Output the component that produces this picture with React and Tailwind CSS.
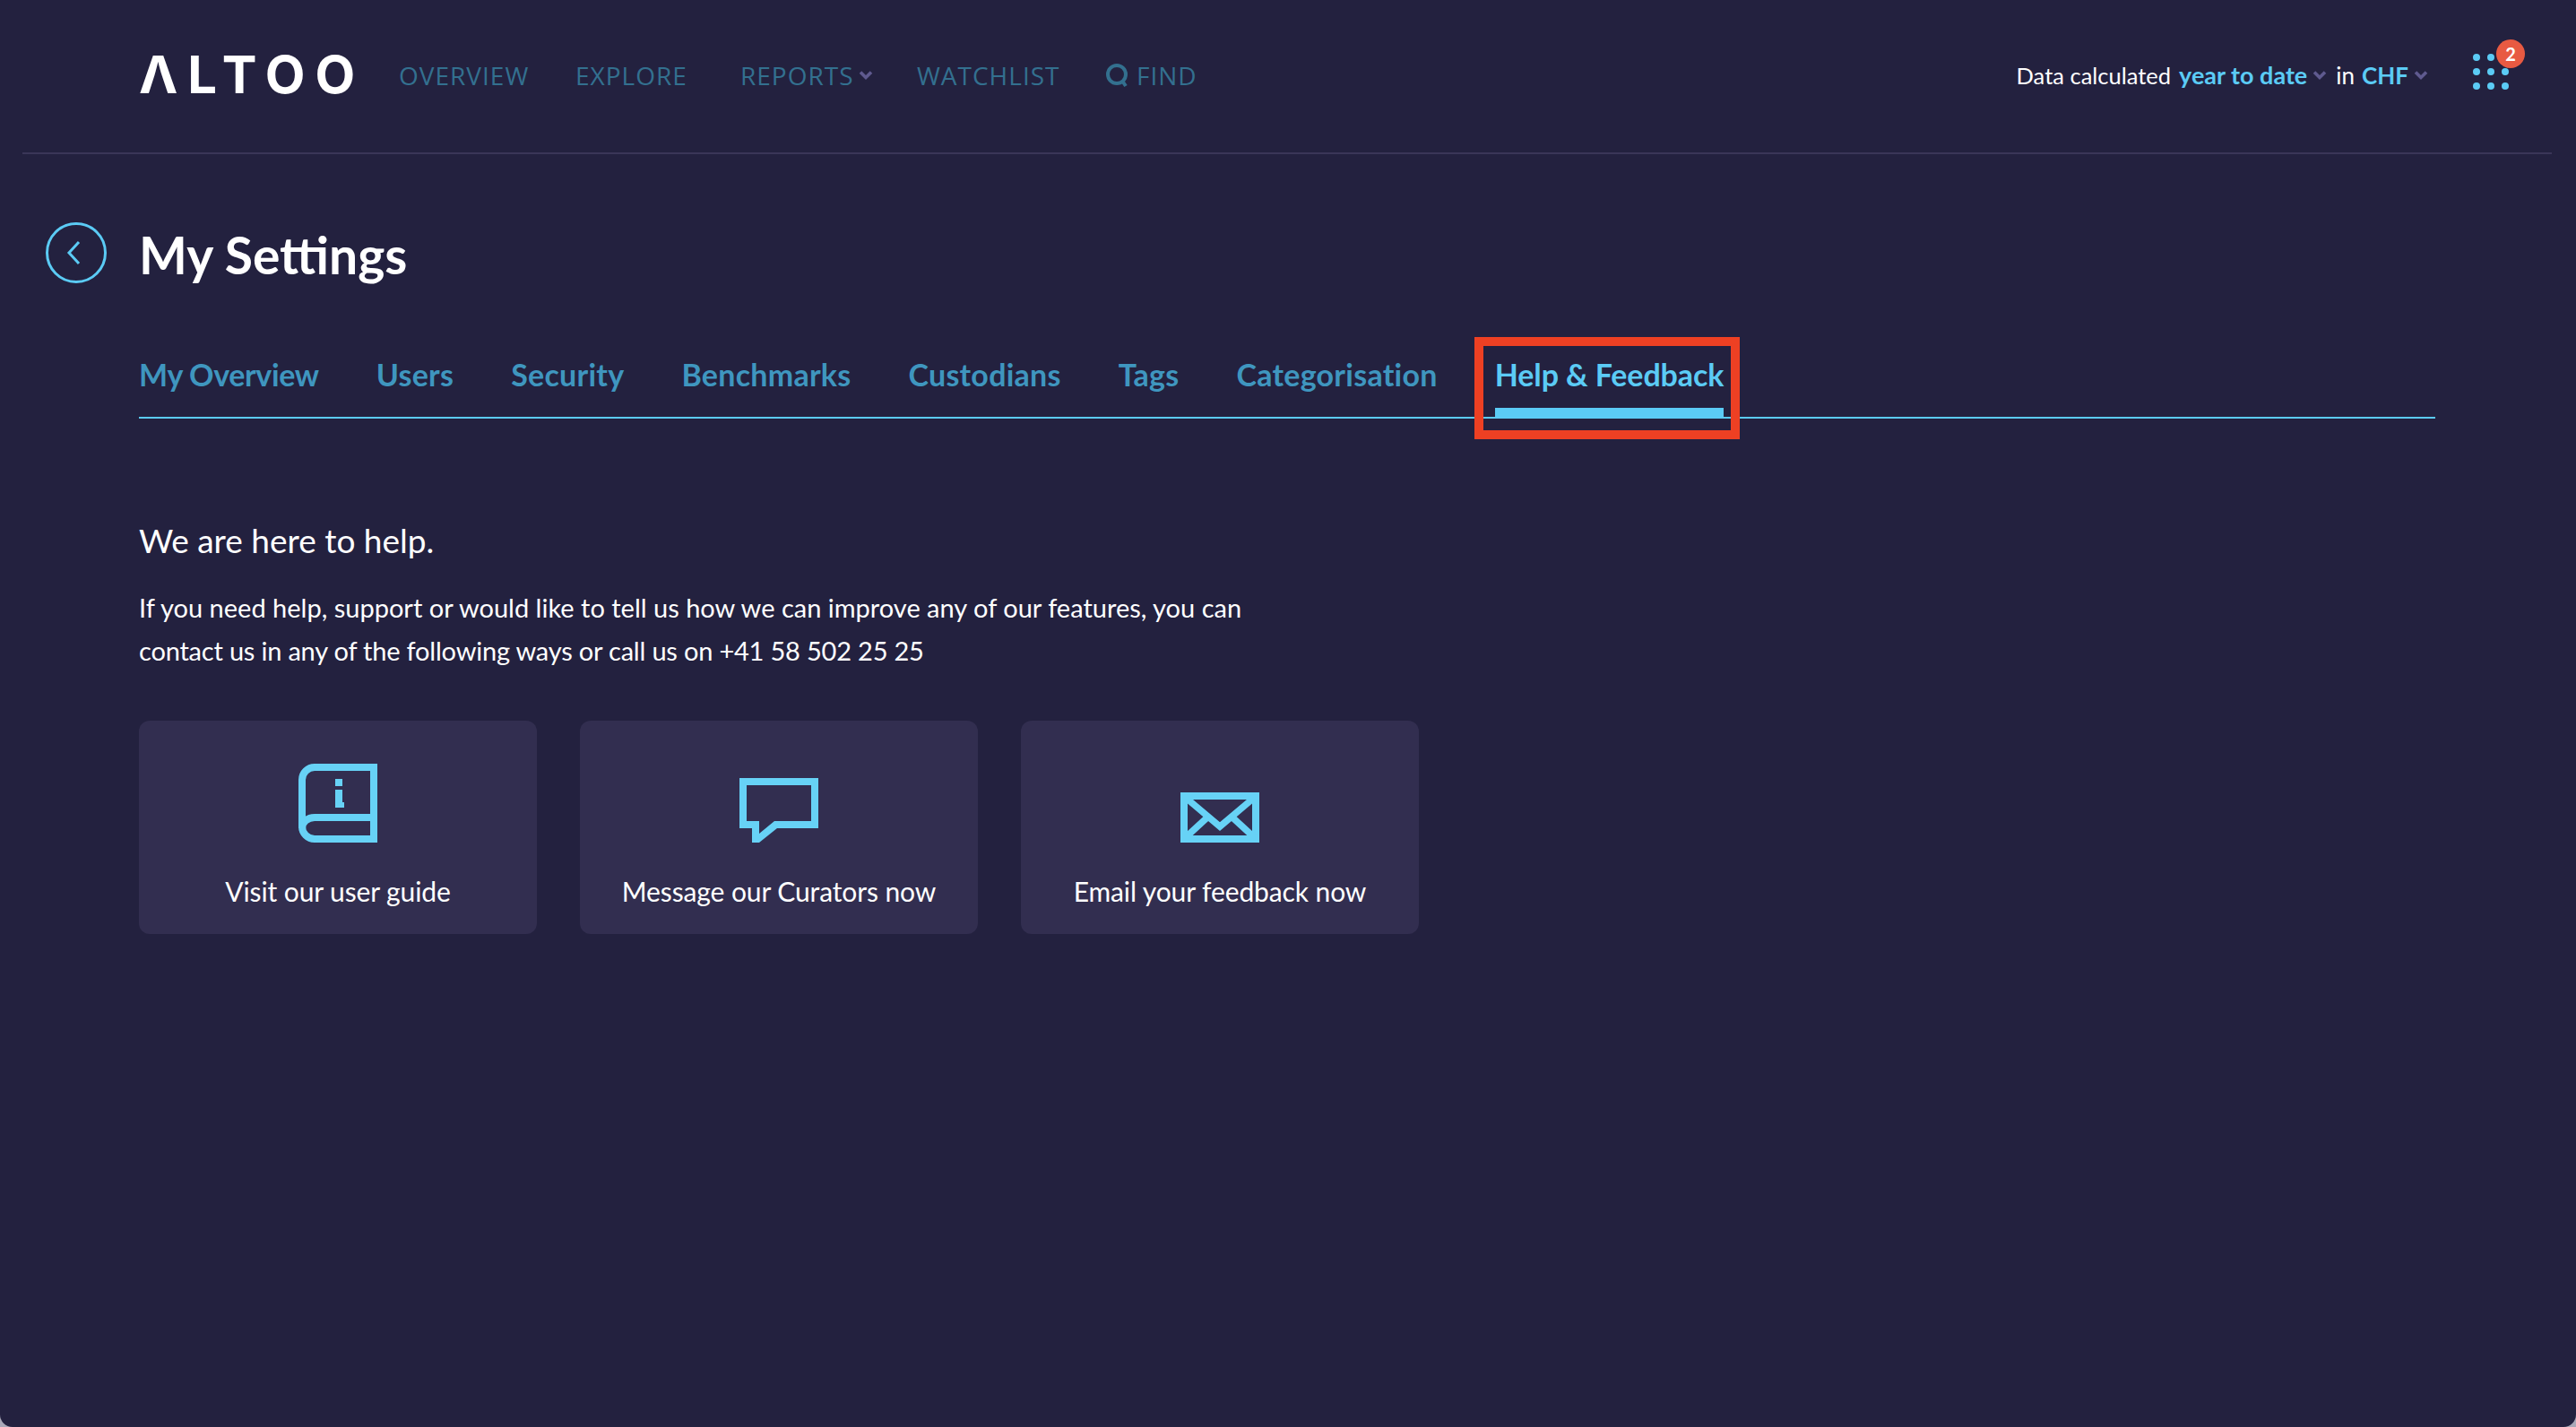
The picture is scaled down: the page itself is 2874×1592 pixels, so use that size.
import React from "react";

const BLUE = "#5bcbf5";

function Chevron({ className }) {
  return (
    <svg viewBox="0 0 16 12" className={className} fill="none" stroke="#5f5a8f" strokeWidth="3.6">
      <path d="M2 2.5 8 8.5 14 2.5" />
    </svg>
  );
}

function BookIcon() {
  return (
    <svg viewBox="0 0 88 88" className="w-[88px] h-[88px]" fill="none" stroke="#67d2f6" strokeWidth="8">
      <path d="M84 4H18A14 14 0 0 0 4 18V70A14 14 0 0 0 18 84H84Z" />
      <path d="M84 60H18A14 12 0 0 0 4 72" />
      <path d="M41 17h8v8h-8zM41 29h8v14h2v6H41z" fill="#67d2f6" stroke="none" />
    </svg>
  );
}

function ChatIcon() {
  return (
    <svg viewBox="0 0 88 72" className="w-[88px] h-[72px]">
      <path fill="#67d2f6" fillRule="evenodd" d="M0 0H88V56H42L22 72H14V56H0ZM8 8V48H22V62L39 48H80V8Z" />
    </svg>
  );
}

function MailIcon() {
  return (
    <svg viewBox="0 0 88 56" className="w-[88px] h-[56px]" fill="none" stroke="#67d2f6" strokeWidth="8">
      <rect x="4" y="4" width="80" height="48" />
      <path d="M6 6 44 38 82 6" strokeWidth="7.5" />
      <path d="M6 50 31 27M82 50 57 27" strokeWidth="7.5" />
    </svg>
  );
}

const tabs = ["My Overview", "Users", "Security", "Benchmarks", "Custodians", "Tags", "Categorisation"];

const cards = [
  { label: "Visit our user guide", icon: <BookIcon /> },
  { label: "Message our Curators now", icon: <ChatIcon /> },
  { label: "Email your feedback now", icon: <MailIcon /> },
];

export default function App() {
  return (
    <div className="w-full h-[1592px] bg-[#a9a8b8] overflow-hidden">
      <div className="h-full rounded-b-[14px] bg-[#23213f] overflow-hidden text-white font-['Lato',sans-serif]">
        <header className="ml-[25px] mr-[27px] h-[172px] border-b-2 border-[#3a3658] pl-[130px] flex items-center relative">
          <div aria-label="ALTOO" className="mb-[4px] w-[240px] font-['Inter',sans-serif] font-bold text-[58px] leading-none tracking-[11px] whitespace-nowrap">
            ΛLTOO
          </div>
          <nav className="mb-[2px] ml-[50px] flex items-center font-['Open_Sans',sans-serif] font-normal text-[28px] leading-[40px] text-[#33708f] tracking-[1px]">
            <span className="w-[197px]">OVERVIEW</span>
            <span className="w-[184px]">EXPLORE</span>
            <span className="flex items-center w-[197px]">
              REPORTS
              <Chevron className="w-[16px] h-[12px] ml-[5px]" />
            </span>
            <span className="w-[210px]">WATCHLIST</span>
            <span className="flex items-center">
              <svg viewBox="0 0 26 28" className="w-[26px] h-[28px] mr-[9px]" fill="none" stroke="#33708f" strokeWidth="4">
                <circle cx="13" cy="13" r="10" />
                <path d="M19 20l4 6" />
              </svg>
              FIND
            </span>
          </nav>
          <div className="mb-[2px] ml-auto mr-[48px] flex items-center text-[25.5px] leading-[40px]">
            <span>Data calculated</span>
            <span className="ml-[9px] font-bold text-[#5bcbf5] text-[27px]">year to date</span>
            <Chevron className="w-[16px] h-[12px] ml-[6px]" />
            <span className="ml-[10px] text-[26px]">in</span>
            <span className="ml-[8px] font-bold text-[#5bcbf5] text-[26px]">CHF</span>
            <Chevron className="w-[16px] h-[12px] ml-[6px]" />
            <div className="relative mb-[8px] ml-[50px] grid grid-cols-3 gap-x-[8px] gap-y-[8px]">
              {Array.from({ length: 9 }).map((_, i) => (
                <span key={i} className="w-[8px] h-[8px] rounded-full bg-[#5bcbf5]" />
              ))}
              <span className="absolute -top-[16px] left-[26px] w-[32px] h-[32px] rounded-full bg-[#e85a42] text-white text-[20px] font-bold leading-[32px] text-center">
                2
              </span>
            </div>
          </div>
        </header>

        <div className="mt-[76px] ml-[51px] flex items-center gap-[36px] h-[68px]">
          <div className="w-[68px] h-[68px] rounded-full border-[3px] border-[#5bcbf5] flex items-center justify-center">
            <svg viewBox="0 0 16 28" className="w-[16px] h-[28px] mr-[6px]" fill="none" stroke={BLUE} strokeWidth="3">
              <path d="M14 2 3 14 14 26" />
            </svg>
          </div>
          <h1 className="mt-[3px] font-bold text-[57px] leading-[68px]">My Settings</h1>
        </div>

        <div className="mt-[78px] ml-[155px] w-[2562px] h-[73px] border-b-2 border-[#5bcbf5] flex gap-[64px] font-bold text-[34px] leading-[48px]">
          {tabs.map((t) => (
            <span key={t} className={t === "My Overview" ? "text-[#3f96bf] whitespace-nowrap tracking-[-0.35px]" : "text-[#3f96bf] whitespace-nowrap tracking-[0.25px]"}>{t}</span>
          ))}
          <span className="relative text-[#5bcbf5] whitespace-nowrap tracking-[-0.1px]">
            Help &amp; Feedback
            <span className="absolute left-0 right-0 top-[61px] h-[12px] bg-[#5bcbf5]" />
            <span className="absolute -left-[23px] -right-[18px] -top-[18px] h-[114px] border-[10px] border-[#ee4023]" />
          </span>
        </div>

        <div className="ml-[155px]">
          <h2 className="mt-[112px] text-[37px] leading-[48px]">We are here to help.</h2>
          <p className="mt-[27px] whitespace-nowrap text-[29px] leading-[48px]">
            If you need help, support or would like to tell us how we can improve any of our features, you can
            <br />
            <span className="tracking-[-0.2px]">contact us in any of the following ways or call us on +41 58 502 25 25</span>
          </p>
          <div className="mt-[54px] flex gap-[48px]">
            {cards.map((c) => (
              <div key={c.label} className="w-[444px] h-[238px] rounded-[12px] bg-[#322e50] flex flex-col items-center justify-end pb-[24px]">
                {c.icon}
                <span className="mt-[30px] text-[30px] leading-[48px] tracking-[-0.1px] whitespace-nowrap">{c.label}</span>
              </div>
            ))}
          </div>
        </div>
      </div>
    </div>
  );
}
